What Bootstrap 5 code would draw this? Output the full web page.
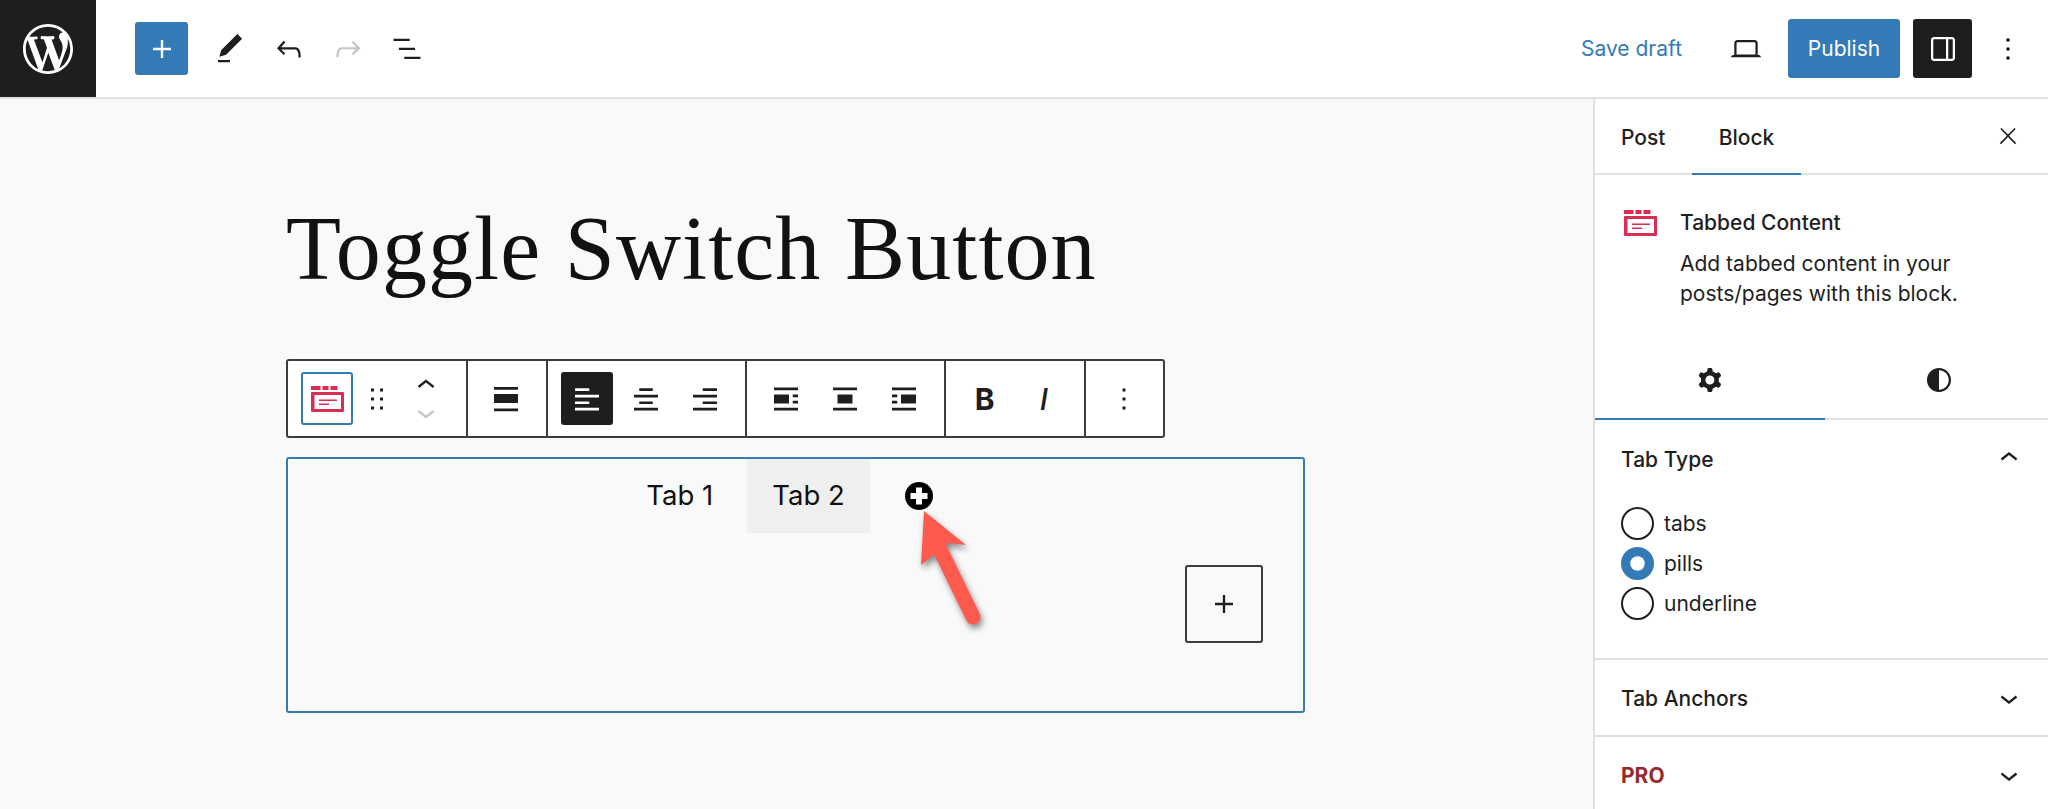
<!DOCTYPE html>
<html lang="en">
<head>
<meta charset="utf-8">
<title>Toggle Switch Button</title>
<link rel="stylesheet" href="https://cdn.jsdelivr.net/npm/bootstrap@5.3.0/dist/css/bootstrap.min.css">
<style>
:root{--wp-ink:#1e1e1e;--wp-blue:#337ab7;--wp-line:#e0e0e0;--wp-red:#d92e52;}
body{font-family:Inter,"Liberation Sans",sans-serif;color:var(--wp-ink);background:#fff;font-size:21px;overflow:hidden;}
svg{display:block;fill:currentColor;flex:none;}
.wp-shell{height:809px;}
.wp-top{height:99px;border-bottom:2px solid var(--wp-line);flex:none;}
.wp-logo{width:96px;height:97px;background:var(--wp-ink);color:#fff;}
.wp-inserter{width:53px;height:53px;background:var(--wp-blue);color:#fff;border-radius:3px;margin-left:39px;margin-right:12px;padding:0;border:0;}
.wp-tool{width:59px;height:53px;padding:0;border:0;background:none;color:var(--wp-ink);}
.wp-tool.is-off{color:#c6c6c6;}
.wp-save{color:var(--wp-blue);font-size:21px;margin-right:34px;}
.wp-publish{width:112px;height:59px;background:var(--wp-blue);border-color:var(--wp-blue);color:#fff;font-size:21px;border-radius:3px;margin-left:13px;margin-right:13px;padding:0;}
.wp-drawer{width:59px;height:59px;background:var(--wp-ink);color:#fff;border-radius:3px;border:0;padding:0;}
.wp-kebab{width:59px;height:59px;border:0;background:none;padding:0;margin-left:6px;margin-right:11px;}
.wp-canvas{background:#f9f9f9;padding-left:286px;min-width:0;}
.wp-title{font-family:"Liberation Serif",serif;font-size:90px;line-height:1;font-weight:400;color:#111;margin:105px 0 65px;letter-spacing:1.1px;white-space:nowrap;}
.wp-bar{width:879px;height:79px;border:2px solid #3c3c3c;border-radius:3px;background:#fff;margin-bottom:19px;}
.wp-group{padding:0 10.5px 0 8.5px;height:100%;}
.wp-group:first-child{padding-left:9.5px;}
.wp-group + .wp-group{border-left:2px solid #3c3c3c;}
.wp-cell{width:59.33px;height:100%;padding:0;border:0;background:none;color:var(--wp-ink);}
.wp-cell.is-drag{width:39.5px;}
.wp-inner{width:52px;height:53px;border-radius:3px;}
.wp-inner.is-dark{background:var(--wp-ink);color:#fff;}
.wp-inner.is-sel{border:2px solid var(--wp-blue);}
.wp-fmt{font-size:30px;line-height:1;}
.wp-mover{line-height:0;}
.wp-block{width:1019px;height:256px;border:2px solid var(--wp-blue);border-radius:3px;}
.wp-tabs{height:74px;}
.wp-tab{height:74px;padding:0 25px;font-size:27.5px;color:#111;}
.wp-tab.is-on{background:#efefef;margin-left:9px;}
.wp-tabadd{margin:0 37px 0 35px;width:28px;height:28px;color:#000;}
.wp-append{width:78px;height:78px;margin:32px 40px 0 auto;border:2px solid #3c3c3c;border-radius:3px;background:none;padding:0;color:var(--wp-ink);}
.wp-arrow{position:absolute;left:610px;top:48px;overflow:visible;}
.wp-side{width:455px;flex:none;border-left:2px solid var(--wp-line);background:#fff;}
.wp-sidetabs{height:76px;border-bottom:2px solid var(--wp-line);}
.wp-stab{height:74px;padding:4px 0 0 26px;font-weight:500;width:97px;flex:none;}
.wp-stab.is-on{padding-left:0;width:109px;box-shadow:0 2px 0 var(--wp-blue);}
.wp-close{width:26px;height:26px;color:var(--wp-ink);margin-right:27px;}
.wp-card{padding:35px 30px 0 29px;height:175px;}
.wp-cardname{font-weight:500;line-height:24px;margin-top:1px;margin-bottom:14px;}
.wp-cardtext{line-height:30px;margin:0;}
.wp-cardicon{margin-right:23px;}
.wp-settabs{height:70px;border-bottom:2px solid var(--wp-line);}
.wp-settab{height:68px;padding-bottom:8px;flex:none;width:230px;}
.wp-settab.is-alt{width:auto;flex:1 1 0;padding-left:5px;}
.wp-settab.is-on{box-shadow:0 2px 0 var(--wp-blue);}
.wp-panel{border-bottom:2px solid var(--wp-line);}
.wp-panelhead{height:75px;padding:0 21px 0 26px;font-weight:500;}
.wp-panelhead span{padding-top:3px;}
.wp-panelhead.is-first{height:76px;}
.wp-red-text{color:#962b2b;font-weight:700;}
.wp-radios{padding:7px 0 0 25.5px;height:162px;}
.wp-radio{height:40px;margin:0;padding:0;min-height:0;}
.wp-radio .form-check-input{width:33px;height:33px;margin:0 10.5px 0 0;float:none;flex:none;border:2px solid var(--wp-ink);background-color:#fff;}
.wp-radio .form-check-input:checked{background-color:var(--wp-blue);border-color:var(--wp-blue);}
.wp-radio label{line-height:1;padding-top:1px;}
</style>
</head>
<body>
<div class="wp-shell d-flex flex-column">
  <header class="wp-top d-flex align-items-center">
    <div class="wp-logo d-flex align-items-center justify-content-center">
      <svg width="60" height="60" viewBox="-2 -2 24 24"><path d="M20 10c0-5.51-4.49-10-10-10C4.48 0 0 4.49 0 10c0 5.52 4.48 10 10 10 5.51 0 10-4.48 10-10zM7.78 15.37L4.37 6.22c.55-.02 1.17-.08 1.17-.08.5-.06.44-1.13-.06-1.11 0 0-1.45.11-2.37.11-.18 0-.37 0-.58-.01C4.12 2.69 6.87 1.11 10 1.11c2.33 0 4.45.87 6.05 2.34-.68-.11-1.65.39-1.65 1.58 0 .74.45 1.36.9 2.1.35.61.55 1.36.55 2.46 0 1.49-1.4 5-1.4 5l-3.03-8.37c.54-.02.82-.17.82-.17.5-.05.44-1.25-.06-1.22 0 0-1.44.12-2.38.12-.87 0-2.33-.12-2.33-.12-.5-.03-.56 1.2-.06 1.22l.92.08 1.26 3.41zM17.41 10c.24-.64.74-1.87.43-4.25.7 1.29 1.05 2.71 1.05 4.25 0 3.29-1.73 6.24-4.4 7.78.97-2.59 1.94-5.2 2.92-7.78zM6.1 18.09C3.12 16.65 1.11 13.53 1.11 10c0-1.3.23-2.48.72-3.59C3.25 10.3 4.67 14.2 6.1 18.09zm4.03-6.63l2.58 6.98c-.86.29-1.76.45-2.71.45-.79 0-1.57-.11-2.29-.33.81-2.38 1.62-4.74 2.42-7.1z"/></svg>
    </div>
    <button class="wp-inserter d-flex align-items-center justify-content-center" aria-label="Add"><svg width="36" height="36" viewBox="0 0 24 24"><path d="M18 11.2h-5.2V6h-1.6v5.2H6v1.6h5.2V18h1.6v-5.2H18z"/></svg></button>
    <button class="wp-tool d-flex align-items-center justify-content-center" aria-label="Tools"><svg width="36" height="36" viewBox="0 0 24 24"><path d="M20.1 5.1L16.9 2 6.2 12.7l-1.3 4.4 4.5-1.3L20.1 5.1zM4 20.8h8v-1.5H4v1.5z"/></svg></button>
    <button class="wp-tool d-flex align-items-center justify-content-center" aria-label="Undo"><svg width="36" height="36" viewBox="0 0 24 24"><path d="M18.3 11.7c-.6-.6-1.4-.9-2.3-.9H6.7l2.9-3.3-1.1-1-4.5 5L8.5 16l1-1-2.7-2.7H16c.5 0 .9.2 1.3.5 1 1 1 3.4 1 4.5v.3h1.5v-.2c0-1.5 0-4.3-1.5-5.7z"/></svg></button>
    <button class="wp-tool is-off d-flex align-items-center justify-content-center" aria-label="Redo"><svg width="36" height="36" viewBox="0 0 24 24"><path d="M15.6 6.5l-1.1 1 2.9 3.3H8c-.9 0-1.7.3-2.3.9-1.4 1.5-1.4 4.2-1.4 5.6v.2h1.5v-.3c0-1.1 0-3.5 1-4.5.3-.3.7-.5 1.3-.5h9.2L14.5 15l1.1 1.1 4.6-4.6-4.6-5z"/></svg></button>
    <button class="wp-tool d-flex align-items-center justify-content-center" aria-label="List"><svg width="36" height="36" viewBox="0 0 24 24"><path d="M13.8 5.2H3v1.5h10.8V5.2zm-3.6 12v1.5H21v-1.5H10.2zm7.2-6H6.6v1.5h10.8v-1.5z"/></svg></button>
    <span class="wp-save ms-auto">Save draft</span>
    <button class="wp-tool d-flex align-items-center justify-content-center" aria-label="View"><svg width="36" height="36" viewBox="0 0 24 24"><path d="M20.5 16h-.7V8c0-1.1-.9-2-2-2H6.2c-1.1 0-2 .9-2 2v8h-.7c-.8 0-1.5.7-1.5 1.5h20c0-.8-.7-1.5-1.5-1.5zM5.7 8c0-.3.2-.5.5-.5h11.6c.3 0 .5.2.5.5v7.6H5.7V8z"/></svg></button>
    <button class="btn wp-publish">Publish</button>
    <button class="wp-drawer d-flex align-items-center justify-content-center" aria-label="Settings"><svg width="36" height="36" viewBox="0 0 24 24"><path fill-rule="evenodd" d="M18 4H6c-1.1 0-2 .9-2 2v12c0 1.1.9 2 2 2h12c1.1 0 2-.9 2-2V6c0-1.1-.9-2-2-2zm-4 14.5H6c-.3 0-.5-.2-.5-.5V6c0-.3.2-.5.5-.5h8v13zm4.500-.5c0 .3-.2.5-.5.5h-2.500v-13H18c.3 0 .5.2.5.5v12z"/></svg></button>
    <button class="wp-kebab d-flex align-items-center justify-content-center" aria-label="Options"><svg width="36" height="36" viewBox="0 0 24 24"><path d="M13 19h-2v-2h2v2zm0-6h-2v-2h2v2zm0-6h-2V5h2v2z"/></svg></button>
  </header>

  <div class="d-flex flex-grow-1" style="min-height:0">
    <main class="wp-canvas flex-grow-1">
      <h1 class="wp-title">Toggle Switch Button</h1>

      <div class="wp-bar d-flex">
        <div class="wp-group d-flex">
          <button class="wp-cell d-flex align-items-center justify-content-center" aria-label="Tabbed Content">
            <span class="wp-inner is-sel d-flex align-items-center justify-content-center">
              <svg width="33" height="26" viewBox="0 0 33 26" style="color:var(--wp-red)"><path d="M0 0h9.5v4H0zM11.5 0h6v4h-6zM19.5 0h7v4h-7z"/><path fill-rule="evenodd" d="M1 6h31a1 1 0 0 1 1 1v18a1 1 0 0 1-1 1H1a1 1 0 0 1-1-1V7a1 1 0 0 1 1-1zm2.500 3v14h26.500V9z"/><path d="M8 13.500h18v1.500H8zM8 17.500h10v1.500H8z"/></svg>
            </span>
          </button>
          <button class="wp-cell is-drag d-flex align-items-center justify-content-center" aria-label="Drag"><svg width="36" height="36" viewBox="0 0 24 24"><path d="M8 7h2V5H8v2zm0 6h2v-2H8v2zm0 6h2v-2H8v2zm6-14v2h2V5h-2zm0 8h2v-2h-2v2zm0 6h2v-2h-2v2z"/></svg></button>
          <div class="wp-cell wp-mover d-flex flex-column align-items-center justify-content-center">
            <svg width="36" height="27" viewBox="0 3 24 18"><path d="M6.500 12.400L12 8l5.500 4.400-.9 1.200L12 10l-4.500 3.600-1-1.200z"/></svg>
            <svg width="36" height="27" viewBox="0 3 24 18" style="color:#c6c6c6"><path d="M17.500 11.600L12 16l-5.500-4.400.9-1.200L12 14l4.500-3.600 1 1.200z"/></svg>
          </div>
        </div>
        <div class="wp-group d-flex">
          <div class="wp-cell d-flex align-items-center justify-content-center"><svg width="36" height="36" viewBox="0 0 24 24"><path d="M4 4h16v1.800H4zM4 8.700h16v6H4zM4 18.400h16v1.800H4z"/></svg></div>
        </div>
        <div class="wp-group d-flex">
          <div class="wp-cell d-flex align-items-center justify-content-center"><span class="wp-inner is-dark d-flex align-items-center justify-content-center"><svg width="36" height="36" viewBox="0 0 24 24"><path d="M4 4.900h9.500v1.800H4zM4 9.200h16V11H4zM4 13.600h9.500v1.800H4zM4 17.900h16v1.800H4z"/></svg></span></div>
          <div class="wp-cell d-flex align-items-center justify-content-center"><svg width="36" height="36" viewBox="0 0 24 24"><path d="M7.500 4.900h9v1.800h-9zM4 9.200h16V11H4zM7.500 13.600h9v1.800h-9zM4 17.900h16v1.800H4z"/></svg></div>
          <div class="wp-cell d-flex align-items-center justify-content-center"><svg width="36" height="36" viewBox="0 0 24 24"><path d="M10.500 4.900H20v1.800h-9.500zM4 9.200h16V11H4zM10.500 13.600H20v1.800h-9.500zM4 17.900h16v1.800H4z"/></svg></div>
        </div>
        <div class="wp-group d-flex">
          <div class="wp-cell d-flex align-items-center justify-content-center"><svg width="36" height="36" viewBox="0 0 24 24"><path d="M4 4.400h16v1.800H4zM4 9h10v6H4zM16.500 9H20v1.800h-3.500zM16.500 13.200H20V15h-3.500zM4 17.900h16v1.800H4z"/></svg></div>
          <div class="wp-cell d-flex align-items-center justify-content-center"><svg width="36" height="36" viewBox="0 0 24 24"><path d="M4 4.400h16v1.800H4zM7 9h10v6H7zM4 17.900h16v1.800H4z"/></svg></div>
          <div class="wp-cell d-flex align-items-center justify-content-center"><svg width="36" height="36" viewBox="0 0 24 24"><path d="M4 4.400h16v1.800H4zM10 9h10v6H10zM4 9h3.500v1.800H4zM4 13.200h3.500V15H4zM4 17.900h16v1.800H4z"/></svg></div>
        </div>
        <div class="wp-group d-flex">
          <div class="wp-cell wp-fmt fw-bold d-flex align-items-center justify-content-center">B</div>
          <div class="wp-cell wp-fmt fw-medium fst-italic d-flex align-items-center justify-content-center">I</div>
        </div>
        <div class="wp-group d-flex">
          <div class="wp-cell d-flex align-items-center justify-content-center"><svg width="36" height="36" viewBox="0 0 24 24"><path d="M13 19h-2v-2h2v2zm0-6h-2v-2h2v2zm0-6h-2V5h2v2z"/></svg></div>
        </div>
      </div>

      <section class="wp-block position-relative">
        <div class="wp-tabs d-flex justify-content-center align-items-center">
          <div class="wp-tab d-flex align-items-center">Tab 1</div>
          <div class="wp-tab is-on d-flex align-items-center">Tab 2</div>
          <svg class="wp-tabadd" viewBox="0 0 28 28"><circle cx="14" cy="14" r="14"/><path d="M11 5.500h6V11h5.500v6H17v5.500h-6V17H5.500v-6H11z" fill="#fff"/></svg>
        </div>
        <button class="wp-append d-flex align-items-center justify-content-center" aria-label="Add block"><svg width="36" height="36" viewBox="0 0 24 24"><path d="M18 11.200h-5.200V6h-1.600v5.200H6v1.600h5.200V18h1.600v-5.200H18z"/></svg></button>
        <svg class="wp-arrow" width="80" height="120" viewBox="0 0 80 120" style="filter:drop-shadow(2px 4px 3px rgba(0,0,0,.45))">
          <path d="M26 4 68 38 51 36 23 58z" fill="#fd5a4e"/>
          <path d="M36 30 75 110" stroke="#fd5a4e" stroke-width="15" stroke-linecap="round" fill="none"/>
        </svg>
      </section>
    </main>

    <aside class="wp-side">
      <div class="wp-sidetabs d-flex">
        <div class="wp-stab d-flex align-items-center">Post</div>
        <div class="wp-stab is-on d-flex align-items-center justify-content-center">Block</div>
        <svg class="wp-close ms-auto align-self-center" viewBox="0 0 24 24"><path d="M13 11.800l6.100-6.300-1-1-6.100 6.200-6.100-6.200-1 1 6.100 6.300-6.500 6.700 1 1 6.500-6.600 6.500 6.600 1-1z"/></svg>
      </div>
      <div class="wp-card d-flex">
        <svg class="wp-cardicon" width="33" height="26" viewBox="0 0 33 26" style="color:var(--wp-red)"><path d="M0 0h9.500v4H0zM11.500 0h6v4h-6zM19.500 0h7v4h-7z"/><path fill-rule="evenodd" d="M1 6h31a1 1 0 0 1 1 1v18a1 1 0 0 1-1 1H1a1 1 0 0 1-1-1V7a1 1 0 0 1 1-1zm2.500 3v14h26.500V9z"/><path d="M8 13.500h18v1.500H8zM8 17.500h10v1.500H8z"/></svg>
        <div>
          <div class="wp-cardname">Tabbed Content</div>
          <p class="wp-cardtext">Add tabbed content in your<br>posts/pages with this block.</p>
        </div>
      </div>
      <div class="wp-settabs d-flex">
        <div class="wp-settab is-on d-flex align-items-center justify-content-center"><svg width="36" height="36" viewBox="0 0 24 24"><path fill-rule="evenodd" d="M10.289 4.836A1 1 0 0111.275 4h1.306a1 1 0 01.987.836l.244 1.466c.787.26 1.503.679 2.108 1.218l1.393-.522a1 1 0 011.216.437l.653 1.130a1 1 0 01-.23 1.273l-1.148.944a6.025 6.025 0 010 2.435l1.149.946a1 1 0 01.23 1.272l-.653 1.130a1 1 0 01-1.216.437l-1.394-.522c-.605.54-1.32.958-2.108 1.218l-.244 1.466a1 1 0 01-.987.836h-1.306a1 1 0 01-.986-.836l-.244-1.466a5.995 5.995 0 01-2.108-1.218l-1.394.522a1 1 0 01-1.217-.436l-.653-1.131a1 1 0 01.23-1.272l1.149-.946a6.026 6.026 0 010-2.435l-1.148-.944a1 1 0 01-.23-1.272l.653-1.131a1 1 0 011.217-.437l1.393.522a5.994 5.994 0 012.108-1.218l.244-1.466zM14.929 12a3 3 0 11-6 0 3 3 0 016 0z"/></svg></div>
        <div class="wp-settab is-alt d-flex align-items-center justify-content-center"><svg width="36" height="36" viewBox="0 0 24 24"><path fill-rule="evenodd" d="M12 4c-4.400 0-8 3.600-8 8s3.600 8 8 8 8-3.600 8-8-3.600-8-8-8zm0 14.500V5.500c3.600 0 6.500 2.900 6.500 6.500s-2.900 6.500-6.500 6.500z"/></svg></div>
      </div>
      <div class="wp-panel">
        <div class="wp-panelhead is-first d-flex align-items-center justify-content-between"><span>Tab Type</span><svg width="36" height="36" viewBox="0 0 24 24"><path d="M6.500 12.400L12 8l5.500 4.400-.9 1.200L12 10l-4.500 3.600-1-1.200z"/></svg></div>
        <div class="wp-radios">
          <div class="form-check wp-radio d-flex align-items-center"><input class="form-check-input" type="radio" name="tt" id="r1"><label for="r1">tabs</label></div>
          <div class="form-check wp-radio d-flex align-items-center"><input class="form-check-input" type="radio" name="tt" id="r2" checked><label for="r2">pills</label></div>
          <div class="form-check wp-radio d-flex align-items-center"><input class="form-check-input" type="radio" name="tt" id="r3"><label for="r3">underline</label></div>
        </div>
      </div>
      <div class="wp-panel">
        <div class="wp-panelhead d-flex align-items-center justify-content-between"><span>Tab Anchors</span><svg width="36" height="36" viewBox="0 0 24 24"><path d="M17.500 11.600L12 16l-5.500-4.400.9-1.200L12 14l4.500-3.600 1 1.200z"/></svg></div>
      </div>
      <div>
        <div class="wp-panelhead d-flex align-items-center justify-content-between"><span class="wp-red-text">PRO</span><svg width="36" height="36" viewBox="0 0 24 24"><path d="M17.500 11.600L12 16l-5.500-4.400.9-1.200L12 14l4.500-3.600 1 1.200z"/></svg></div>
      </div>
    </aside>
  </div>
</div>
<script src="https://cdn.jsdelivr.net/npm/bootstrap@5.3.0/dist/js/bootstrap.bundle.min.js"></script>
</body>
</html>
